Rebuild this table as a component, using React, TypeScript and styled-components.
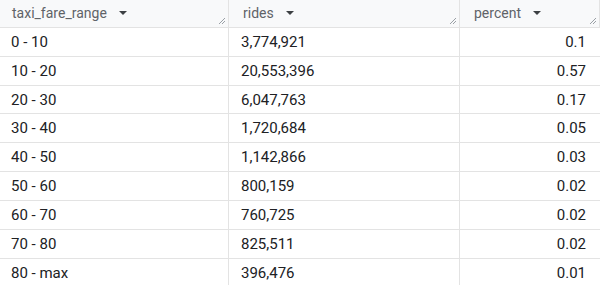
import styled, { createGlobalStyle } from "styled-components";

const rows = [
  ["0 - 10", "3,774,921", "0.1"],
  ["10 - 20", "20,553,396", "0.57"],
  ["20 - 30", "6,047,763", "0.17"],
  ["30 - 40", "1,720,684", "0.05"],
  ["40 - 50", "1,142,866", "0.03"],
  ["50 - 60", "800,159", "0.02"],
  ["60 - 70", "760,725", "0.02"],
  ["70 - 80", "825,511", "0.02"],
  ["80 - max", "396,476", "0.01"],
];

const columns = ["taxi_fare_range", "rides", "percent"];

export default function App() {
  return (
    <>
      <GlobalStyle />
      <Table>
        {columns.map((c, i) => (
          <HeadCell key={c} $pad={i === 0 ? 12 : 14}>
            <span>{c}</span>
            <Caret />
            <Grip viewBox="0 0 8 8">
              <path d="M1 7 L7 1 M4 7 L7 4" stroke="#9aa0a6" strokeWidth="1" />
            </Grip>
          </HeadCell>
        ))}
        {rows.map((r) => (
          <Row key={r[0]}>
            <Cell $pad={11}>{r[0]}</Cell>
            <Cell $pad={12}>{r[1]}</Cell>
            <Cell $pad={14} $right>{r[2]}</Cell>
          </Row>
        ))}
      </Table>
    </>
  );
}

const GlobalStyle = createGlobalStyle`
  body {
    margin: 0;
    background: #ffffff;
    font-family: Roboto, "Liberation Sans", sans-serif;
  }
`;

const Table = styled.div`
  width: 600px;
  display: grid;
  grid-template-columns: 229px 231px 1fr;
  overflow: hidden;
  height: 285px;
`;

const Row = styled.div`
  display: contents;
`;

const HeadCell = styled.div<{ $pad: number }>`
  position: relative;
  height: 28px;
  display: flex;
  align-items: center;
  padding-left: ${(p) => p.$pad}px;
  padding-bottom: 1px;
  box-sizing: border-box;
  background: #f8f9fa;
  border-bottom: 1px solid #e3e3e3;
  border-right: 1px solid #e3e3e3;
  color: #5f6368;
  font-size: 14px;
  &:last-of-type {
    border-right: none;
  }
`;

const Caret = styled.span`
  width: 0;
  height: 0;
  margin-left: 12px;
  border-left: 4.5px solid transparent;
  border-right: 4.5px solid transparent;
  border-top: 4.5px solid #3c4043;
`;

const Grip = styled.svg`
  position: absolute;
  right: 2px;
  bottom: 2px;
  width: 8px;
  height: 8px;
`;

const Cell = styled.div<{ $pad: number; $right?: boolean }>`
  height: 28.83px;
  box-sizing: border-box;
  display: flex;
  align-items: center;
  justify-content: ${(p) => (p.$right ? "flex-end" : "flex-start")};
  padding: 0 ${(p) => (p.$right ? p.$pad : 0)}px 0 ${(p) => (p.$right ? 0 : p.$pad)}px;
  border-bottom: 1px solid #e3e3e3;
  border-right: 1px solid #e3e3e3;
  color: #202124;
  font-size: 15px;
  &:nth-child(3) {
    border-right: none;
  }
`;
